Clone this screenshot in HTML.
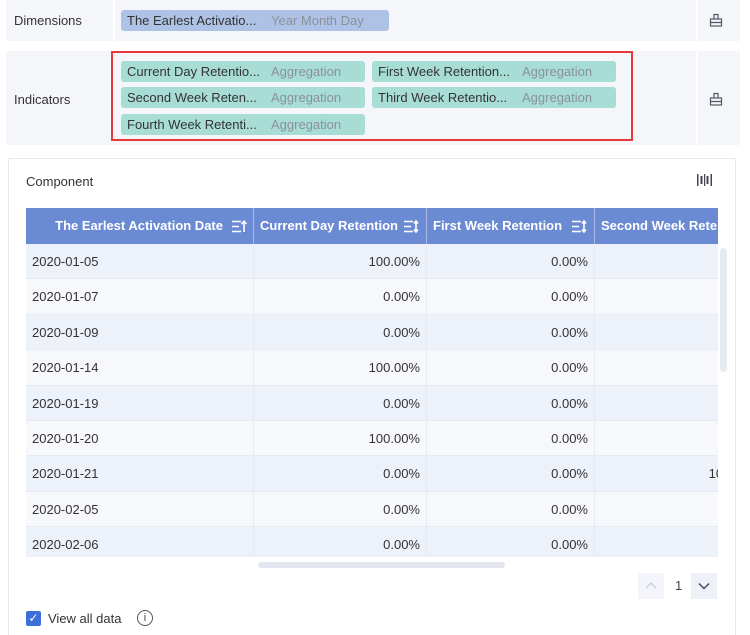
<!DOCTYPE html>
<html><head><style>
*{box-sizing:border-box;margin:0;padding:0}
body{width:750px;height:635px;background:#fff;font-family:"Liberation Sans",sans-serif;font-size:13px;color:#333;position:relative;overflow:hidden}
.row{position:absolute;left:6px;width:734px;background:#f5f6fa}
.lbl{position:absolute;left:8px;color:#333}
.sep{position:absolute;top:0;bottom:0;width:2px;background:#fff}
.pill{position:absolute;height:21px;border-radius:3px;line-height:21px;padding-left:6px;white-space:nowrap;color:#333}
.pill span{position:absolute;left:150px;color:#8a9199}
.g{background:#a8ddd6;width:244px}
.b{background:#aec2e6;width:268px}
.icon{position:absolute;width:14px;height:14px}
.panel{position:absolute;left:8px;top:158px;width:728px;height:477px;border:1px solid #e6e8ee;border-bottom:none}
.tbl{position:absolute;left:26px;top:208px;width:692px;height:349px;overflow:hidden}
.hd{position:absolute;top:0;height:36px;background:#6b8ad4;color:#fff;font-weight:bold;line-height:36px;white-space:nowrap}
.c{position:absolute;height:100%;overflow:hidden;white-space:nowrap}
.tr{position:absolute;left:0;width:800px;height:35.4px;line-height:35.4px;border-bottom:1px solid #e6eaf3}
.si{position:absolute;top:12px}
</style></head><body>
<div class="row" style="top:0;height:41px">
 <div class="lbl" style="top:13px">Dimensions</div>
 <div class="sep" style="left:107px"></div><div class="sep" style="left:690px"></div>
 <div class="pill b" style="left:115px;top:10px">The Earlest Activatio...<span>Year Month Day</span></div>
 <svg class="icon" style="left:703px;top:13px" viewBox="0 0 14 14" fill="none" stroke="#556" stroke-width="1.2"><rect x="1.5" y="6" width="11" height="7"/><path d="M1.5 9.5h11M5 6V1.5h4V6"/></svg>
</div>
<div class="row" style="top:51px;height:94px">
 <div class="lbl" style="top:41px">Indicators</div>
 <div class="sep" style="left:690px"></div>
 <svg class="icon" style="left:703px;top:41px" viewBox="0 0 14 14" fill="none" stroke="#556" stroke-width="1.2"><rect x="1.5" y="6" width="11" height="7"/><path d="M1.5 9.5h11M5 6V1.5h4V6"/></svg>
</div>
<div style="position:absolute;left:111px;top:51px;width:522px;height:90px;border:2px solid #e8383c"></div>
<div class="pill g" style="left:121px;top:61px">Current Day Retentio...<span>Aggregation</span></div>
<div class="pill g" style="left:372px;top:61px">First Week Retention...<span>Aggregation</span></div>
<div class="pill g" style="left:121px;top:87px">Second Week Reten...<span>Aggregation</span></div>
<div class="pill g" style="left:372px;top:87px">Third Week Retentio...<span>Aggregation</span></div>
<div class="pill g" style="left:121px;top:114px">Fourth Week Retenti...<span>Aggregation</span></div>

<div class="panel"></div>
<div style="position:absolute;left:26px;top:174px">Component</div>
<svg style="position:absolute;left:697px;top:173px" width="15" height="14" viewBox="0 0 15 14" fill="#445"><rect x="0" y="1" width="1.5" height="12"/><rect x="3.5" y="3" width="2" height="8"/><rect x="7" y="1" width="1.2" height="12"/><rect x="9.5" y="3" width="2" height="8"/><rect x="13.5" y="1" width="1.5" height="12"/></svg>

<div class="tbl">
 <div class="hd" style="left:0;width:800px"></div>
 <div class="hd" style="left:0;width:227px;text-align:right;padding-right:30px">The Earlest Activation Date</div>
 <div class="hd" style="left:227px;width:173px;border-left:1px solid #aab9e6;padding-left:6px">Current Day Retention</div>
 <div class="hd" style="left:400px;width:168px;border-left:1px solid #aab9e6;padding-left:6px">First Week Retention</div>
 <div class="hd" style="left:568px;width:200px;border-left:1px solid #aab9e6;padding-left:6px">Second Week Retention</div>
 <svg class="si" style="left:205px" width="16" height="13" viewBox="0 0 16 13" stroke="#fff" stroke-width="1.6" fill="none"><path d="M1 1.5h9M1 6.5h7M1 11.5h9M13 12V1.5M10.5 4L13 1.2 15.5 4"/></svg>
 <svg class="si" style="left:377px" width="16" height="13" viewBox="0 0 16 13" stroke="#fff" stroke-width="1.6" fill="none"><path d="M1 1.5h9M1 6.5h7M1 11.5h9M13 1v11M11 3.5L13 1l2 2.5M11 9.5L13 12l2-2.5"/></svg>
 <svg class="si" style="left:545px" width="16" height="13" viewBox="0 0 16 13" stroke="#fff" stroke-width="1.6" fill="none"><path d="M1 1.5h9M1 6.5h7M1 11.5h9M13 1v11M11 3.5L13 1l2 2.5M11 9.5L13 12l2-2.5"/></svg>
 <div id="rows"></div>
</div>
<div style="position:absolute;left:720px;top:248px;width:7px;height:124px;border-radius:4px;background:#e6eaf3"></div>
<div style="position:absolute;left:258px;top:562px;width:247px;height:6px;border-radius:3px;background:#e3e6ee"></div>
<div style="position:absolute;left:638px;top:573px;width:26px;height:26px;background:#f3f5fa"><svg width="26" height="26" viewBox="0 0 26 26" fill="none" stroke="#ccd" stroke-width="1.3"><path d="M8 15l5-5 5 5"/></svg></div>
<div style="position:absolute;left:675px;top:578px;color:#444">1</div>
<div style="position:absolute;left:691px;top:573px;width:26px;height:26px;background:#eef1f8"><svg width="26" height="26" viewBox="0 0 26 26" fill="none" stroke="#445" stroke-width="1.4"><path d="M8 10.5l5 5 5-5"/></svg></div>
<div style="position:absolute;left:26px;top:611px;width:15px;height:15px;background:#3c6fd8;border-radius:2px;color:#fff;font-size:12px;line-height:15px;text-align:center">✓</div>
<div style="position:absolute;left:48px;top:611px">View all data</div>
<div style="position:absolute;left:137px;top:610px;width:16px;height:16px;border:1.3px solid #555;border-radius:50%;text-align:center;font-size:11px;line-height:14px;color:#444">i</div>
<script>
var d=[["2020-01-05","100.00%","0.00%",""],["2020-01-07","0.00%","0.00%",""],["2020-01-09","0.00%","0.00%",""],["2020-01-14","100.00%","0.00%",""],["2020-01-19","0.00%","0.00%",""],["2020-01-20","100.00%","0.00%",""],["2020-01-21","0.00%","0.00%","100.00%"],["2020-02-05","0.00%","0.00%",""],["2020-02-06","0.00%","0.00%",""]];
var h="";d.forEach(function(r,i){h+='<div class="tr" style="top:'+(36+i*35.4)+'px;background:'+(i%2?'#f7f8fc':'#edf1fa')+'"><div class="c" style="left:6px">'+r[0]+'</div><div class="c" style="left:227px;width:167px;text-align:right;border-left:1px solid #e6eaf3">'+r[1]+'</div><div class="c" style="left:400px;width:162px;text-align:right;border-left:1px solid #e6eaf3">'+r[2]+'</div><div class="c" style="left:568px;width:166px;text-align:right;border-left:1px solid #e6eaf3">'+r[3]+'</div></div>';});
document.getElementById("rows").innerHTML=h;
</script>
</body></html>
